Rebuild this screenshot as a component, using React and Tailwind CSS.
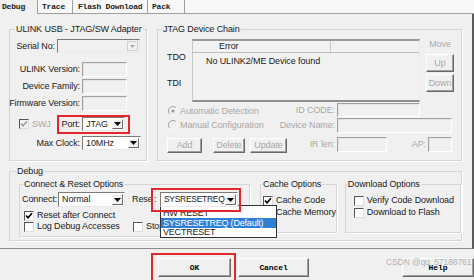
import React from "react";

const F = "font-['Liberation_Sans',Arial,sans-serif]";
const MONO = "font-['Liberation_Mono',monospace]";

function Arrow() {
  return (
    <div className="w-[11px] self-stretch bg-[#f0f0f0] border-t border-l border-t-white border-l-white border-r border-b border-r-[#696969] border-b-[#696969] flex items-center justify-center shrink-0">
      <svg width="7" height="4" viewBox="0 0 7 4"><path d="M0 0h7L3.5 4z" fill="#000" /></svg>
    </div>
  );
}

function Combo({ w, text, disabled, h = "h-[15px]", tc = "" }) {
  return (
    <div className={`${w} ${h} flex items-stretch border-t border-l border-t-[#7a7a7a] border-l-[#7a7a7a] border-r border-b border-r-[#e8e8e8] border-b-[#e8e8e8] ${disabled ? "bg-[#f0f0f0]" : "bg-white"} p-[1px] shrink-0`}>
      <div className={`flex-1 flex items-center pl-[2px] whitespace-nowrap overflow-hidden ${tc}`}>{text}</div>
      {disabled ? (
        <div className="w-[11px] self-stretch bg-[#f0f0f0] border border-[#d0d0d0] flex items-center justify-center">
          <svg width="5" height="3" viewBox="0 0 5 3"><path d="M0 0h5L2.5 3z" fill="#aaa" /></svg>
        </div>
      ) : (
        <Arrow />
      )}
    </div>
  );
}

function TextBox({ w, h = "h-[15px]" }) {
  return <div className={`${w} ${h} shrink-0 bg-[#f0f0f0] border-t border-l border-t-[#a0a0a0] border-l-[#a0a0a0] border-r border-b border-r-[#ffffff] border-b-[#ffffff] shadow-[inset_1px_1px_0_#e3e3e3]`} />;
}

function Btn({ w, h = "h-[18px]", children, disabled, font = "" }) {
  return (
    <div className={`${w} ${h} flex items-center justify-center bg-[#f0f0f0] border-t border-l border-t-white border-l-white border-r border-b border-r-[#696969] border-b-[#696969] shadow-[inset_-1px_-1px_0_#a0a0a0] ${disabled ? "text-[#a8a8a8]" : "text-black"} ${font}`}>
      {children}
    </div>
  );
}

function Check({ checked, disabled }) {
  return (
    <div className={`w-[10px] h-[10px] border-t border-l border-t-[#555] border-l-[#555] border-r border-b border-r-[#ddd] border-b-[#ddd] ${disabled ? "bg-[#f0f0f0]" : "bg-white"} flex items-center justify-center shrink-0`}>
      {checked && (
        <svg width="8" height="8" viewBox="0 0 8 8"><path d="M1 3.5l2 2.2L7 1.2" stroke={disabled ? "#a0a0a0" : "#000"} strokeWidth="1.6" fill="none" /></svg>
      )}
    </div>
  );
}

function Radio({ on }) {
  return (
    <svg width="10" height="10" viewBox="0 0 10 10" className="shrink-0">
      <path d="M8.2 1.8A4.5 4.5 0 0 0 1.8 8.2" stroke="#a0a0a0" strokeWidth="1" fill="none" />
      <path d="M1.8 8.2A4.5 4.5 0 0 0 8.2 1.8" stroke="#f8f8f8" strokeWidth="1" fill="none" />
      {on && <circle cx="5" cy="5" r="1.6" fill="#9a9a9a" />}
    </svg>
  );
}

function Group({ title, className, children, lm = "ml-[5px]" }) {
  return (
    <fieldset className={`border border-[#d5d5d5] shadow-[1px_1px_0_#fff] ${className}`}>
      <legend className={`${lm} px-[1px] h-[12px] leading-[12px] whitespace-nowrap`}>{title}</legend>
      {children}
    </fieldset>
  );
}

export default function App() {
  return (
    <div className={`w-[474px] h-[280px] bg-[#f0f0f0] relative overflow-hidden text-[9px] leading-none text-[#1a1a1a] tracking-[-0.1px] ${F}`}>
      {/* Tabs */}
      <div className={`h-[14px] flex bg-[#f8f8f8] ${MONO} font-bold text-[8px] tracking-[-0.2px]`}>
        <div className="w-[38px] h-[14px] bg-[#f0f0f0] border-r border-[#a0a0a0] pl-[2px] flex items-center">Debug</div>
        <div className="w-[35px] border-r border-b border-[#a0a0a0] pl-[4px] flex items-center">Trace</div>
        <div className="w-[75px] border-r border-b border-[#a0a0a0] pl-[5px] flex items-center">Flash Download</div>
        <div className="w-[37px] border-r border-b border-[#a0a0a0] pl-[4px] flex items-center">Pack</div>
        <div className="flex-1 border-b border-[#a0a0a0]" />
      </div>

      {/* Panel */}
      <div className="h-[235px] border-r-2 border-r-[#5a5a5a] border-b border-b-[#8a8a8a] pl-[9px] pt-[9px] bg-[#f0f0f0]">
        <div className="flex gap-[10px] h-[138px]">
          {/* ULINK group */}
          <Group title="ULINK USB - JTAG/SW Adapter" className="w-[138px] h-[138px]">
            <div className="flex items-center mt-[4px] h-[14px]">
              <div className="w-[47px] flex justify-end pr-[2px] whitespace-nowrap">Serial No:</div>
              <Combo w="w-[83px]" h="h-[14px]" text="" disabled />
            </div>
            {["ULINK Version:", "Device Family:", "Firmware Version:"].map((t, i) => (
              <div key={t} className={`flex items-center h-[15px] ${i === 0 ? "mt-[9px]" : "mt-[2px]"}`}>
                <div className="w-[72px] flex justify-end pr-[2px] whitespace-nowrap">{t}</div>
                <TextBox w="w-[45px]" />
              </div>
            ))}
            <div className="flex items-center mt-[6px] h-[14px]">
              <div className="w-[47px] flex items-center pl-[9px]">
                <Check checked disabled />
                <span className="ml-[3px] text-[#a8a8a8]">SWJ</span>
              </div>
              <div className="w-[73px] h-[19px] -my-[2px] border-2 border-[#e1262d] flex items-center">
                <div className="w-[23px] flex justify-end pr-[2px]">Port:</div>
                <Combo w="w-[43px]" h="h-[14px]" text="JTAG" />
              </div>
            </div>
            <div className="flex items-center mt-[5px] h-[14px]">
              <div className="w-[72px] flex justify-end pr-[2px] whitespace-nowrap">Max Clock:</div>
              <Combo w="w-[59px]" h="h-[14px]" text="10MHz" />
            </div>
          </Group>

          {/* JTAG group */}
          <Group title="JTAG Device Chain" className="w-[305px] h-[138px]" lm="ml-[4px]">
            <div className="flex mt-[4px] h-[63px]">
              <div className="w-[34px] pl-[9px] flex flex-col">
                <div className="mt-[14px]">TDO</div>
                <div className="mt-[17px]">TDI</div>
              </div>
              <div className="w-[228px] h-[63px] bg-[#f2f2f2] border-t-2 border-t-[#9a9a9a] border-l border-l-[#c8c8c8] border-b-2 border-b-[#8f8f8f] border-r border-r-[#e8e8e8] flex flex-col">
                <div className="h-[12px] flex border-b border-[#bdbdbd]">
                  <div className="w-[138px] border-r border-[#c8c8c8] pl-[26px] flex items-center">Error</div>
                </div>
                <div className="pl-[13px] mt-[4px] whitespace-nowrap">No ULINK2/ME Device found</div>
              </div>
              <div className="ml-[6px] w-[28px] flex flex-col">
                <div className="h-[10px] flex items-center justify-center text-[#a8a8a8]">Move</div>
                <div className="mt-[5px]"><Btn w="w-[28px]" disabled>Up</Btn></div>
                <div className="mt-[2px]"><Btn w="w-[28px]" disabled>Down</Btn></div>
              </div>
            </div>
            <div className="flex">
              <div className="w-[142px] flex flex-col text-[#a8a8a8]">
                <div className="h-[12px] mt-[3px] flex items-center pl-[10px] whitespace-nowrap"><Radio on /><span className="ml-[2px]">Automatic Detection</span></div>
                <div className="h-[12px] mt-[2px] flex items-center pl-[10px] whitespace-nowrap"><Radio /><span className="ml-[2px]">Manual Configuration</span></div>
                <div className="flex mt-[7px] pl-[9px]">
                  <Btn w="w-[35px] shrink-0" h="h-[15px]" disabled>Add</Btn>
                  <div className="ml-[11px]"><Btn w="w-[32px] shrink-0" h="h-[15px]" disabled>Delete</Btn></div>
                  <div className="ml-[5px]"><Btn w="w-[37px] shrink-0" h="h-[15px]" disabled>Update</Btn></div>
                </div>
              </div>
              <div className="flex flex-col text-[#a8a8a8]">
                <div className="flex items-center h-[14px] mt-[1px]">
                  <div className="w-[37px] flex justify-end pr-[2px] whitespace-nowrap">ID CODE:</div>
                  <TextBox w="w-[83px]" h="h-[14px]" />
                </div>
                <div className="flex items-center h-[15px] mt-[1px]">
                  <div className="w-[37px] flex justify-end pr-[2px] whitespace-nowrap">Device Name:</div>
                  <TextBox w="w-[115px]" />
                </div>
                <div className="flex items-center h-[15px] mt-[4px]">
                  <div className="w-[37px] flex justify-end pr-[2px] whitespace-nowrap">IR len:</div>
                  <TextBox w="w-[50px]" />
                  <div className="w-[41px] flex justify-end pr-[2px]">AP:</div>
                  <TextBox w="w-[24px]" />
                </div>
              </div>
            </div>
          </Group>
        </div>

        {/* Debug group */}
        <Group title="Debug" className="mt-[4px] w-[453px] h-[76px]" lm="ml-[6px]">
          <div className="flex">
            <Group title="Connect & Reset Options" className="ml-[9px] mt-[1px] w-[231px] h-[59px]" lm="ml-[3px]">
              <div className="flex items-center h-[15px] mt-[2px]">
                <div className="w-[38px] pl-[2px]">Connect:</div>
                <Combo w="w-[67px]" text="Normal" />
                <div className="ml-[7px] w-[19px] overflow-hidden whitespace-nowrap">Reset</div>
                <div className="relative z-10 h-[24px] -my-[4px] w-[90px] border-2 border-[#e1262d] flex items-center">
                  <div className="w-[7px] pl-[1px]">:</div>
                  <Combo w="w-[78px]" text="SYSRESETREQ" tc="text-[8.5px] tracking-[-0.3px] pl-[1px]" />
                </div>
              </div>
              <div className="flex items-center h-[11px] mt-[3px] pl-[4px]">
                <Check checked />
                <span className="ml-[3px] whitespace-nowrap">Reset after Connect</span>
              </div>
              <div className="flex items-center h-[11px] pl-[4px]">
                <div className="w-[109px] flex items-center">
                  <Check />
                  <span className="ml-[3px] whitespace-nowrap">Log Debug Accesses</span>
                </div>
                <Check />
                <span className="ml-[3px] whitespace-nowrap">Stop after Reset</span>
              </div>
            </Group>
            <Group title="Cache Options" className="ml-[10px] mt-[1px] w-[76px] h-[55px]" lm="ml-[1px]">
              <div className="flex items-center h-[11px] mt-[5px] pl-[2px]"><Check checked /><span className="ml-[3px] whitespace-nowrap">Cache Code</span></div>
              <div className="flex items-center h-[11px] mt-[1px] pl-[2px]"><Check checked /><span className="ml-[3px] whitespace-nowrap">Cache Memory</span></div>
            </Group>
            <Group title="Download Options" className="ml-[8px] mt-[1px] w-[116px] h-[55px]" lm="ml-[1px]">
              <div className="flex items-center h-[11px] mt-[5px] pl-[8px]"><Check /><span className="ml-[3px] whitespace-nowrap">Verify Code Download</span></div>
              <div className="flex items-center h-[11px] mt-[1px] pl-[8px]"><Check /><span className="ml-[3px] whitespace-nowrap">Download to Flash</span></div>
            </Group>
          </div>
        </Group>
      </div>

      {/* Bottom buttons */}
      <div className={`flex ${MONO} font-bold text-[8px]`}>
        <div className="ml-[151px] mt-[4px] w-[86px] h-[30px] border-2 border-[#e1262d] pl-[5px] pt-[3px]">
          <Btn w="w-[73px]" h="h-[19px]">OK</Btn>
        </div>
        <div className="ml-[2px] mt-[9px]"><Btn w="w-[71px]" h="h-[19px]">Cancel</Btn></div>
        <div className="ml-[93px] mt-[9px]"><Btn w="w-[72px]" h="h-[19px]">Help</Btn></div>
      </div>

      {/* Dropdown list overlay */}
      <div className="absolute left-[160px] top-[205px] w-[117px] h-[33px] bg-white border border-[#333] flex flex-col text-[9px] tracking-[-0.2px]">
        <div className="h-[12px] pl-[2px] pt-[3px] overflow-hidden">HW RESET</div>
        <div className="h-[10px] bg-[#2f7fd6] text-white pl-[2px] flex items-center whitespace-nowrap">SYSRESETREQ (Default)</div>
        <div className="h-[9px] pl-[2px] flex items-center">VECTRESET</div>
      </div>

      {/* Watermark */}
      <div className="absolute left-[386px] top-[258px] text-[8.5px] tracking-[-0.1px] text-[#9aa0a6]/80 whitespace-nowrap">CSDN @qq_57188761</div>
    </div>
  );
}
